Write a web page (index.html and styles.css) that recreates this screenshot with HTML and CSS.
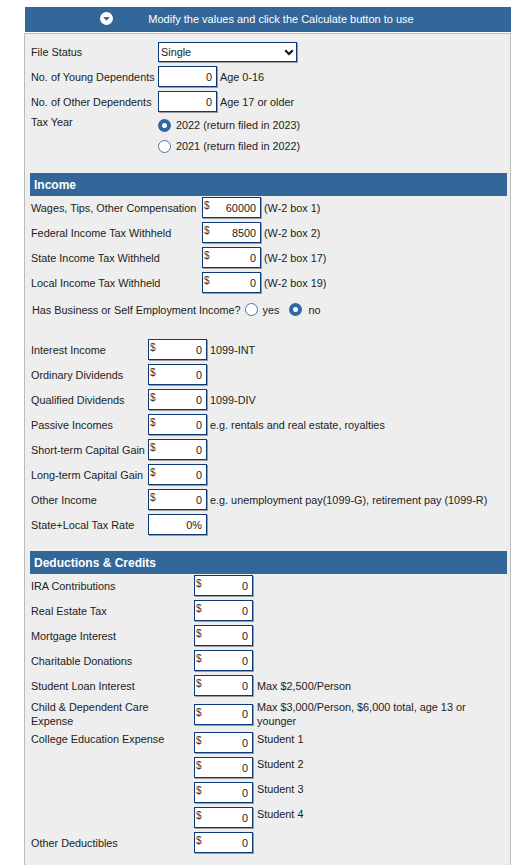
FILE: index.html
```html
<!DOCTYPE html>
<html lang="en">
<head>
<meta charset="utf-8">
<title>Income Tax Calculator</title>
<link rel="stylesheet" href="styles.css">
</head>
<body>
<div class="calc">
  <div class="topbar">
    <svg class="toggle" width="13" height="13" viewBox="0 0 13 13" aria-hidden="true">
      <circle cx="6.5" cy="6.5" r="6.5" fill="#ffffff"/>
      <path d="M3.2 5 L9.8 5 L6.5 8.8 Z" fill="#336699"/>
    </svg>
    <span>Modify the values and click the Calculate button to use</span>
  </div>
  <div class="panel">
    <div class="grid basic">
      <div class="lbl">File Status</div>
      <div class="span2">
        <span class="select-wrap">
          <select class="status"><option>Single</option></select>
          <svg class="chev" width="10" height="7" viewBox="0 0 10 7" aria-hidden="true"><path d="M1.2 1.2 L5 5 L8.8 1.2" fill="none" stroke="#111" stroke-width="2"/></svg>
        </span>
      </div>
      <div class="lbl">No. of Young Dependents</div>
      <input class="num" type="text" value="0">
      <div class="desc">Age 0-16</div>
      <div class="lbl">No. of Other Dependents</div>
      <input class="num" type="text" value="0">
      <div class="desc">Age 17 or older</div>
      <div class="lbl top">Tax Year</div>
      <div class="span2 radios">
        <label class="opt"><input class="radio" type="radio" name="year" checked><span>2022 (return filed in 2023)</span></label>
        <label class="opt"><input class="radio" type="radio" name="year"><span>2021 (return filed in 2022)</span></label>
      </div>
    </div>

    <div class="section-title first">Income</div>
    <div class="grid w2">
      <div class="lbl">Wages, Tips, Other Compensation</div>
      <span class="money"><span class="cur">$</span><input class="num" type="text" value="60000"></span>
      <div class="desc">(W-2 box 1)</div>
      <div class="lbl">Federal Income Tax Withheld</div>
      <span class="money"><span class="cur">$</span><input class="num" type="text" value="8500"></span>
      <div class="desc">(W-2 box 2)</div>
      <div class="lbl">State Income Tax Withheld</div>
      <span class="money"><span class="cur">$</span><input class="num" type="text" value="0"></span>
      <div class="desc">(W-2 box 17)</div>
      <div class="lbl">Local Income Tax Withheld</div>
      <span class="money"><span class="cur">$</span><input class="num" type="text" value="0"></span>
      <div class="desc">(W-2 box 19)</div>
    </div>
    <div class="business">
      <span>Has Business or Self Employment Income?</span>
      <label class="inline-opt yes"><input class="radio" type="radio" name="biz"><span>yes</span></label>
      <label class="inline-opt no"><input class="radio" type="radio" name="biz" checked><span>no</span></label>
    </div>
    <div class="grid other">
      <div class="lbl">Interest Income</div>
      <span class="money"><span class="cur">$</span><input class="num" type="text" value="0"></span>
      <div class="desc">1099-INT</div>
      <div class="lbl">Ordinary Dividends</div>
      <span class="money"><span class="cur">$</span><input class="num" type="text" value="0"></span>
      <div class="desc"></div>
      <div class="lbl">Qualified Dividends</div>
      <span class="money"><span class="cur">$</span><input class="num" type="text" value="0"></span>
      <div class="desc">1099-DIV</div>
      <div class="lbl">Passive Incomes</div>
      <span class="money"><span class="cur">$</span><input class="num" type="text" value="0"></span>
      <div class="desc">e.g. rentals and real estate, royalties</div>
      <div class="lbl">Short-term Capital Gain</div>
      <span class="money"><span class="cur">$</span><input class="num" type="text" value="0"></span>
      <div class="desc"></div>
      <div class="lbl">Long-term Capital Gain</div>
      <span class="money"><span class="cur">$</span><input class="num" type="text" value="0"></span>
      <div class="desc"></div>
      <div class="lbl">Other Income</div>
      <span class="money"><span class="cur">$</span><input class="num" type="text" value="0"></span>
      <div class="desc">e.g. unemployment pay(1099-G), retirement pay (1099-R)</div>
      <div class="lbl">State+Local Tax Rate</div>
      <input class="num" type="text" value="0%">
      <div class="desc"></div>
    </div>

    <div class="section-title second">Deductions &amp; Credits</div>
    <div class="grid ded">
      <div class="lbl">IRA Contributions</div>
      <span class="money"><span class="cur">$</span><input class="num" type="text" value="0"></span>
      <div class="desc"></div>
      <div class="lbl">Real Estate Tax</div>
      <span class="money"><span class="cur">$</span><input class="num" type="text" value="0"></span>
      <div class="desc"></div>
      <div class="lbl">Mortgage Interest</div>
      <span class="money"><span class="cur">$</span><input class="num" type="text" value="0"></span>
      <div class="desc"></div>
      <div class="lbl">Charitable Donations</div>
      <span class="money"><span class="cur">$</span><input class="num" type="text" value="0"></span>
      <div class="desc"></div>
      <div class="lbl">Student Loan Interest</div>
      <span class="money"><span class="cur">$</span><input class="num" type="text" value="0"></span>
      <div class="desc">Max $2,500/Person</div>
      <div class="lbl top wrap">Child &amp; Dependent Care Expense</div>
      <span class="money"><span class="cur">$</span><input class="num" type="text" value="0"></span>
      <div class="desc top">Max $3,000/Person, $6,000 total, age 13 or younger</div>
      <div class="lbl top">College Education Expense</div>
      <span class="money"><span class="cur">$</span><input class="num" type="text" value="0"></span>
      <div class="desc top">Student 1</div>
      <div class="lbl"></div>
      <span class="money"><span class="cur">$</span><input class="num" type="text" value="0"></span>
      <div class="desc top">Student 2</div>
      <div class="lbl"></div>
      <span class="money"><span class="cur">$</span><input class="num" type="text" value="0"></span>
      <div class="desc top">Student 3</div>
      <div class="lbl"></div>
      <span class="money"><span class="cur">$</span><input class="num" type="text" value="0"></span>
      <div class="desc top">Student 4</div>
      <div class="lbl">Other Deductibles</div>
      <span class="money"><span class="cur">$</span><input class="num" type="text" value="0"></span>
      <div class="desc"></div>
    </div>
  </div>
</div>
</body>
</html>
```

FILE: styles.css
```css
html, body {
  margin: 0;
  padding: 0;
  background: #ffffff;
}

body {
  font-family: "Liberation Sans", Arial, sans-serif;
  font-size: 10.85px;
  color: #222222;
}

.calc {
  margin: 7px 0 0 24px;
  width: 487px;
}

.topbar {
  height: 25px;
  margin-left: 1px;
  background: #336699;
  color: #ffffff;
  font-size: 11px;
  display: flex;
  align-items: center;
  justify-content: center;
  padding-right: 22px;
  box-sizing: border-box;
}

.toggle {
  display: block;
  margin-right: 35px;
  margin-top: -3px;
}

.topbar span {
  margin-top: -2px;
}

.panel {
  margin-top: 1px;
  background: #eeeeee;
  border: 1px solid #bbbbbb;
  border-bottom: none;
  padding: 0 3px 30px 5px;
}

.grid {
  display: grid;
  align-items: center;
  row-gap: 4px;
  margin-left: 1px;
}

.basic {
  grid-template-columns: 127px 59px 1fr;
  margin-top: 8px;
}

.w2 {
  grid-template-columns: 171px 59px 1fr;
  margin-top: 1px;
}

.other {
  grid-template-columns: 117px 59px 1fr;
  margin-top: 17px;
}

.ded {
  grid-template-columns: 163px 59px 1fr;
  margin-top: 1px;
}

.lbl {
  line-height: 14px;
  white-space: nowrap;
}

.lbl.wrap {
  white-space: normal;
  max-width: 140px;
}

.top {
  align-self: start;
}

.basic .lbl.top {
  margin-top: -1px;
}

.desc {
  padding-left: 3px;
  line-height: 14px;
}

.ded .desc {
  padding-left: 4px;
  max-width: 212px;
}

.span2 {
  grid-column: span 2;
}

.select-wrap {
  position: relative;
  display: inline-block;
}

.status {
  appearance: none;
  -webkit-appearance: none;
  display: block;
  width: 139px;
  height: 20px;
  box-sizing: border-box;
  border: 1px solid #0c3a78;
  box-shadow: 1px 1px 0 rgba(0, 0, 0, 0.35);
  border-radius: 0;
  background: #ffffff;
  font-family: "Liberation Sans", Arial, sans-serif;
  font-size: 10.85px;
  color: #222222;
  padding: 0 0 0 2px;
  margin: 0;
}

.chev {
  position: absolute;
  right: 3px;
  top: 7px;
}

.num {
  display: block;
  width: 59px;
  height: 21px;
  box-sizing: border-box;
  margin: 0;
  border: 1px solid #0c3a78;
  box-shadow: 1px 1px 0 rgba(0, 0, 0, 0.35);
  border-radius: 0;
  background: #ffffff;
  font-family: "Liberation Sans", Arial, sans-serif;
  font-size: 10.85px;
  color: #222222;
  text-align: right;
  padding: 0 4px 0 12px;
  outline: none;
}

.money {
  position: relative;
  display: block;
}

.cur {
  position: absolute;
  left: 2px;
  top: 3px;
  font-size: 10px;
  line-height: 12px;
  color: #333333;
  pointer-events: none;
  z-index: 1;
}

.radios {
  display: flex;
  flex-direction: column;
  gap: 3px;
  align-self: start;
}

.opt {
  display: flex;
  align-items: center;
  height: 18px;
  gap: 5px;
}

.radio {
  appearance: none;
  -webkit-appearance: none;
  width: 13px;
  height: 13px;
  margin: 0;
  box-sizing: border-box;
  border-radius: 50%;
  border: 1px solid #4f76a3;
  background: #ffffff;
  flex: none;
}

.radio:checked {
  border: 4px solid #2f68a2;
}

.section-title {
  height: 23px;
  background: #336699;
  color: #ffffff;
  font-weight: bold;
  font-size: 12px;
  display: flex;
  align-items: center;
  padding-left: 4px;
}

.section-title.first {
  margin-top: 18px;
}

.section-title.second {
  margin-top: 16px;
}

.business {
  display: flex;
  align-items: center;
  height: 25px;
  margin-top: 4px;
  padding-left: 2px;
  white-space: nowrap;
}

.inline-opt {
  display: flex;
  align-items: center;
  gap: 5px;
}

.inline-opt.yes {
  margin-left: 4px;
}

.inline-opt.no {
  margin-left: 10px;
  gap: 6px;
}
```
